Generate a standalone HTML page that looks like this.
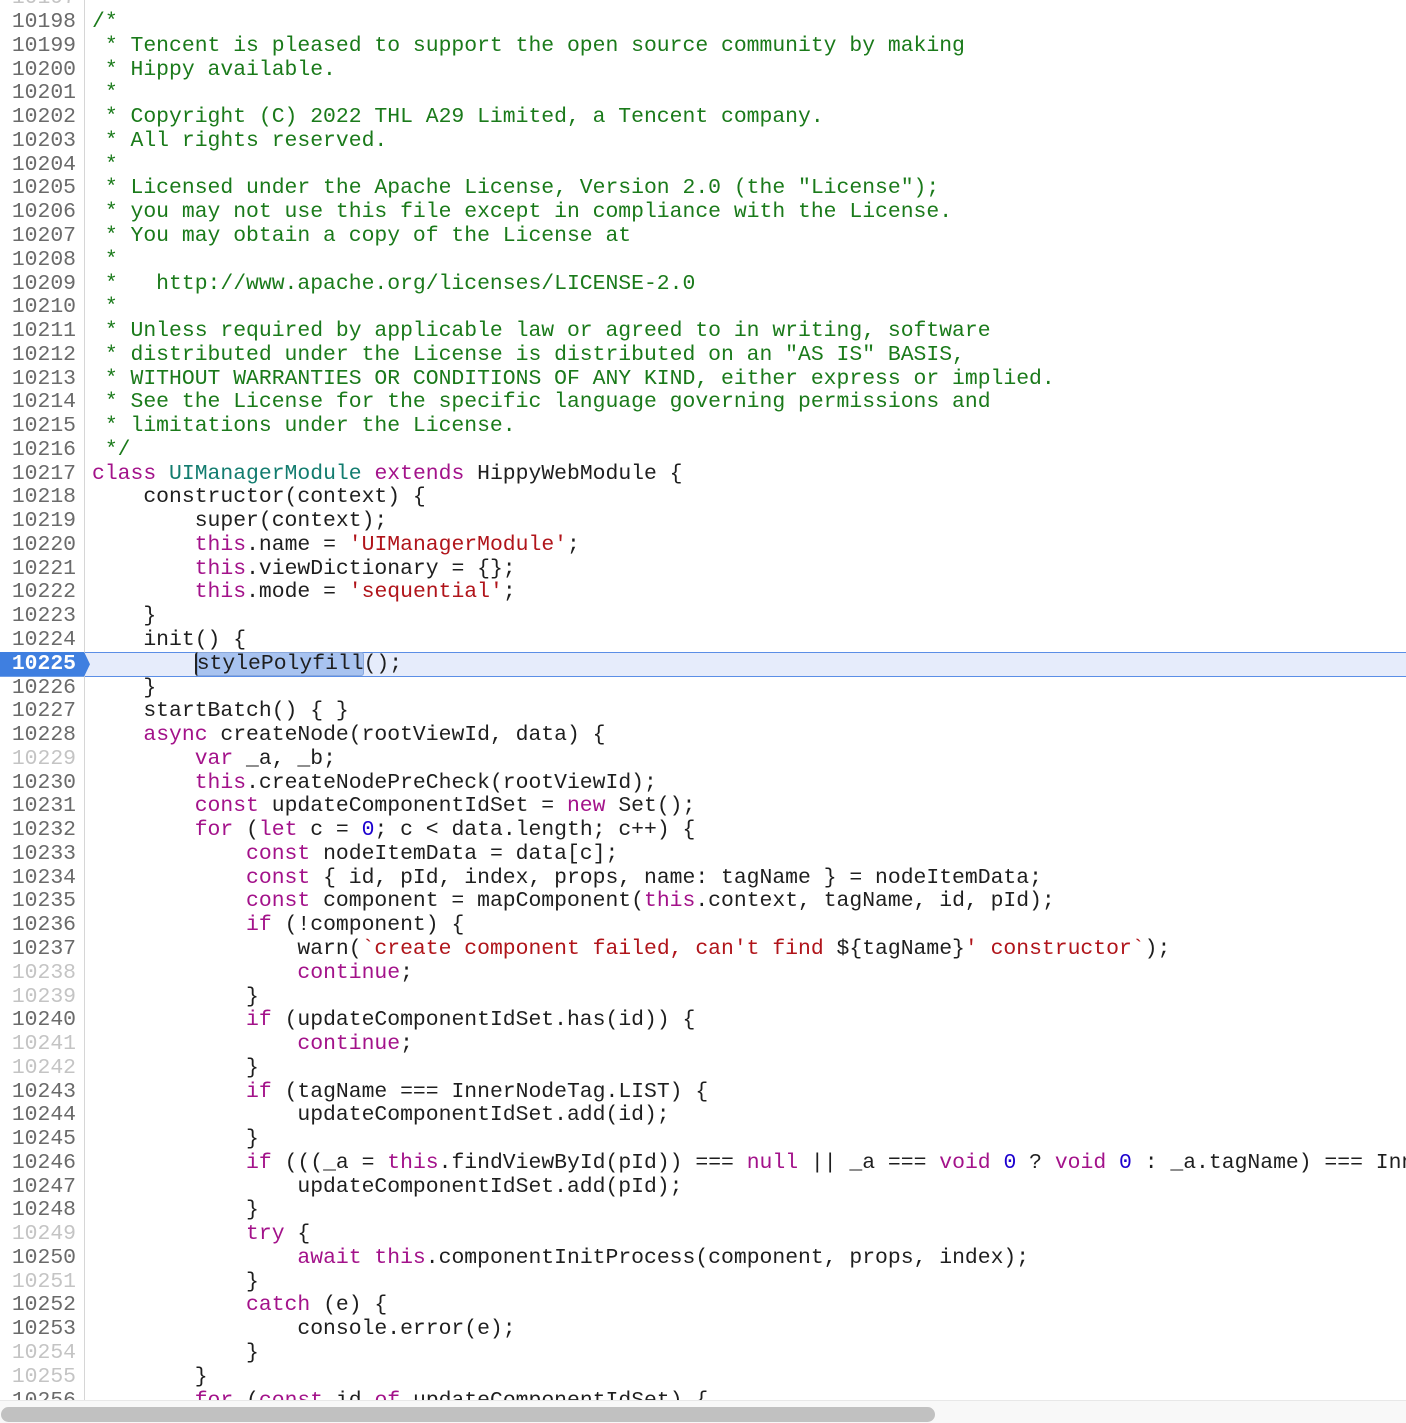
<!DOCTYPE html>
<html><head><meta charset="utf-8"><style>
html,body{margin:0;padding:0;background:#fff;width:1406px;height:1422px;overflow:hidden}
#wrap{position:absolute;left:0;top:0;width:1406px;height:1400px;overflow:hidden}
#gut{position:absolute;left:0;top:0;width:84px;height:1400px;border-right:1px solid #d6d6d6;background:#fff}
#lines{position:absolute;left:0;top:-12.66px;width:1406px;font:21.4px/23.77px "Liberation Mono",monospace;color:#1e1e1e}
.l{height:23.77px;position:relative;white-space:nowrap}
.n{position:absolute;left:0;width:76px;text-align:right;color:#6a6a6a;white-space:pre}
.n.f{color:#c4c4c4}
.c{position:absolute;left:92px;white-space:pre}
.cm{color:#1a7a1a}.k{color:#a3128a}.t{color:#127c6f}.s{color:#b0141a}.d{color:#1c00cf}
.hl{position:absolute;left:85px;right:0;top:-1px;height:23px;background:#e6ecfb;border-top:1px solid #5b8ee6;border-bottom:1px solid #5b8ee6}
.badge{position:absolute;left:0;top:-1px;width:90px;height:25px;background:#3f7fe0;color:#fff;clip-path:polygon(0 0,84px 0,90px 50%,84px 100%,0 100%)}
.badge span{position:absolute;left:0;width:76px;text-align:right;font-weight:bold;top:1px}
.sel{background:#a8c3f0;border-radius:3px;box-shadow:inset 0 0 0 1px #8aa8dc;border-left:2px solid #222}
#sb{position:absolute;left:0;top:1400px;width:1406px;height:22px;background:#f8f8f8;border-top:1px solid #e8e8e8}
#thumb{position:absolute;left:1px;top:6px;width:934px;height:15px;background:#c1c1c1;border-radius:8px}
</style></head><body>
<div id="wrap"><div id="gut"></div>
<div id="lines">
<div class="l"><span class="n f">10197</span><span class="c"></span></div>
<div class="l"><span class="n">10198</span><span class="c cm">/*</span></div>
<div class="l"><span class="n">10199</span><span class="c cm"> * Tencent is pleased to support the open source community by making</span></div>
<div class="l"><span class="n">10200</span><span class="c cm"> * Hippy available.</span></div>
<div class="l"><span class="n">10201</span><span class="c cm"> *</span></div>
<div class="l"><span class="n">10202</span><span class="c cm"> * Copyright (C) 2022 THL A29 Limited, a Tencent company.</span></div>
<div class="l"><span class="n">10203</span><span class="c cm"> * All rights reserved.</span></div>
<div class="l"><span class="n">10204</span><span class="c cm"> *</span></div>
<div class="l"><span class="n">10205</span><span class="c cm"> * Licensed under the Apache License, Version 2.0 (the "License");</span></div>
<div class="l"><span class="n">10206</span><span class="c cm"> * you may not use this file except in compliance with the License.</span></div>
<div class="l"><span class="n">10207</span><span class="c cm"> * You may obtain a copy of the License at</span></div>
<div class="l"><span class="n">10208</span><span class="c cm"> *</span></div>
<div class="l"><span class="n">10209</span><span class="c cm"> *   http://www.apache.org/licenses/LICENSE-2.0</span></div>
<div class="l"><span class="n">10210</span><span class="c cm"> *</span></div>
<div class="l"><span class="n">10211</span><span class="c cm"> * Unless required by applicable law or agreed to in writing, software</span></div>
<div class="l"><span class="n">10212</span><span class="c cm"> * distributed under the License is distributed on an "AS IS" BASIS,</span></div>
<div class="l"><span class="n">10213</span><span class="c cm"> * WITHOUT WARRANTIES OR CONDITIONS OF ANY KIND, either express or implied.</span></div>
<div class="l"><span class="n">10214</span><span class="c cm"> * See the License for the specific language governing permissions and</span></div>
<div class="l"><span class="n">10215</span><span class="c cm"> * limitations under the License.</span></div>
<div class="l"><span class="n">10216</span><span class="c cm"> */</span></div>
<div class="l"><span class="n">10217</span><span class="c"><span class="k">class</span> <span class="t">UIManagerModule</span> <span class="k">extends</span> HippyWebModule {</span></div>
<div class="l"><span class="n">10218</span><span class="c">    constructor(context) {</span></div>
<div class="l"><span class="n">10219</span><span class="c">        super(context);</span></div>
<div class="l"><span class="n">10220</span><span class="c">        <span class="k">this</span>.name = <span class="s">'UIManagerModule'</span>;</span></div>
<div class="l"><span class="n">10221</span><span class="c">        <span class="k">this</span>.viewDictionary = {};</span></div>
<div class="l"><span class="n">10222</span><span class="c">        <span class="k">this</span>.mode = <span class="s">'sequential'</span>;</span></div>
<div class="l"><span class="n">10223</span><span class="c">    }</span></div>
<div class="l"><span class="n">10224</span><span class="c">    init() {</span></div>
<div class="l"><div class="hl"></div><div class="badge"><span>10225</span></div><span class="c">        <span class="sel">stylePolyfill</span>();</span></div>
<div class="l"><span class="n">10226</span><span class="c">    }</span></div>
<div class="l"><span class="n">10227</span><span class="c">    startBatch() { }</span></div>
<div class="l"><span class="n">10228</span><span class="c">    <span class="k">async</span> createNode(rootViewId, data) {</span></div>
<div class="l"><span class="n f">10229</span><span class="c">        <span class="k">var</span> _a, _b;</span></div>
<div class="l"><span class="n">10230</span><span class="c">        <span class="k">this</span>.createNodePreCheck(rootViewId);</span></div>
<div class="l"><span class="n">10231</span><span class="c">        <span class="k">const</span> updateComponentIdSet = <span class="k">new</span> Set();</span></div>
<div class="l"><span class="n">10232</span><span class="c">        <span class="k">for</span> (<span class="k">let</span> c = <span class="d">0</span>; c &lt; data.length; c++) {</span></div>
<div class="l"><span class="n">10233</span><span class="c">            <span class="k">const</span> nodeItemData = data[c];</span></div>
<div class="l"><span class="n">10234</span><span class="c">            <span class="k">const</span> { id, pId, index, props, name: tagName } = nodeItemData;</span></div>
<div class="l"><span class="n">10235</span><span class="c">            <span class="k">const</span> component = mapComponent(<span class="k">this</span>.context, tagName, id, pId);</span></div>
<div class="l"><span class="n">10236</span><span class="c">            <span class="k">if</span> (!component) {</span></div>
<div class="l"><span class="n">10237</span><span class="c">                warn(<span class="s">`create component failed, can't find </span>${tagName}<span class="s">' constructor`</span>);</span></div>
<div class="l"><span class="n f">10238</span><span class="c">                <span class="k">continue</span>;</span></div>
<div class="l"><span class="n f">10239</span><span class="c">            }</span></div>
<div class="l"><span class="n">10240</span><span class="c">            <span class="k">if</span> (updateComponentIdSet.has(id)) {</span></div>
<div class="l"><span class="n f">10241</span><span class="c">                <span class="k">continue</span>;</span></div>
<div class="l"><span class="n f">10242</span><span class="c">            }</span></div>
<div class="l"><span class="n">10243</span><span class="c">            <span class="k">if</span> (tagName === InnerNodeTag.LIST) {</span></div>
<div class="l"><span class="n">10244</span><span class="c">                updateComponentIdSet.add(id);</span></div>
<div class="l"><span class="n">10245</span><span class="c">            }</span></div>
<div class="l"><span class="n">10246</span><span class="c">            <span class="k">if</span> (((_a = <span class="k">this</span>.findViewById(pId)) === <span class="k">null</span> || _a === <span class="k">void</span> <span class="d">0</span> ? <span class="k">void</span> <span class="d">0</span> : _a.tagName) === InnerNodeTag.LIST</span></div>
<div class="l"><span class="n">10247</span><span class="c">                updateComponentIdSet.add(pId);</span></div>
<div class="l"><span class="n">10248</span><span class="c">            }</span></div>
<div class="l"><span class="n f">10249</span><span class="c">            <span class="k">try</span> {</span></div>
<div class="l"><span class="n">10250</span><span class="c">                <span class="k">await</span> <span class="k">this</span>.componentInitProcess(component, props, index);</span></div>
<div class="l"><span class="n f">10251</span><span class="c">            }</span></div>
<div class="l"><span class="n">10252</span><span class="c">            <span class="k">catch</span> (e) {</span></div>
<div class="l"><span class="n">10253</span><span class="c">                console.error(e);</span></div>
<div class="l"><span class="n f">10254</span><span class="c">            }</span></div>
<div class="l"><span class="n f">10255</span><span class="c">        }</span></div>
<div class="l"><span class="n">10256</span><span class="c">        <span class="k">for</span> (<span class="k">const</span> id <span class="k">of</span> updateComponentIdSet) {</span></div>
</div></div>
<div id="sb"><div id="thumb"></div></div>
</body></html>
